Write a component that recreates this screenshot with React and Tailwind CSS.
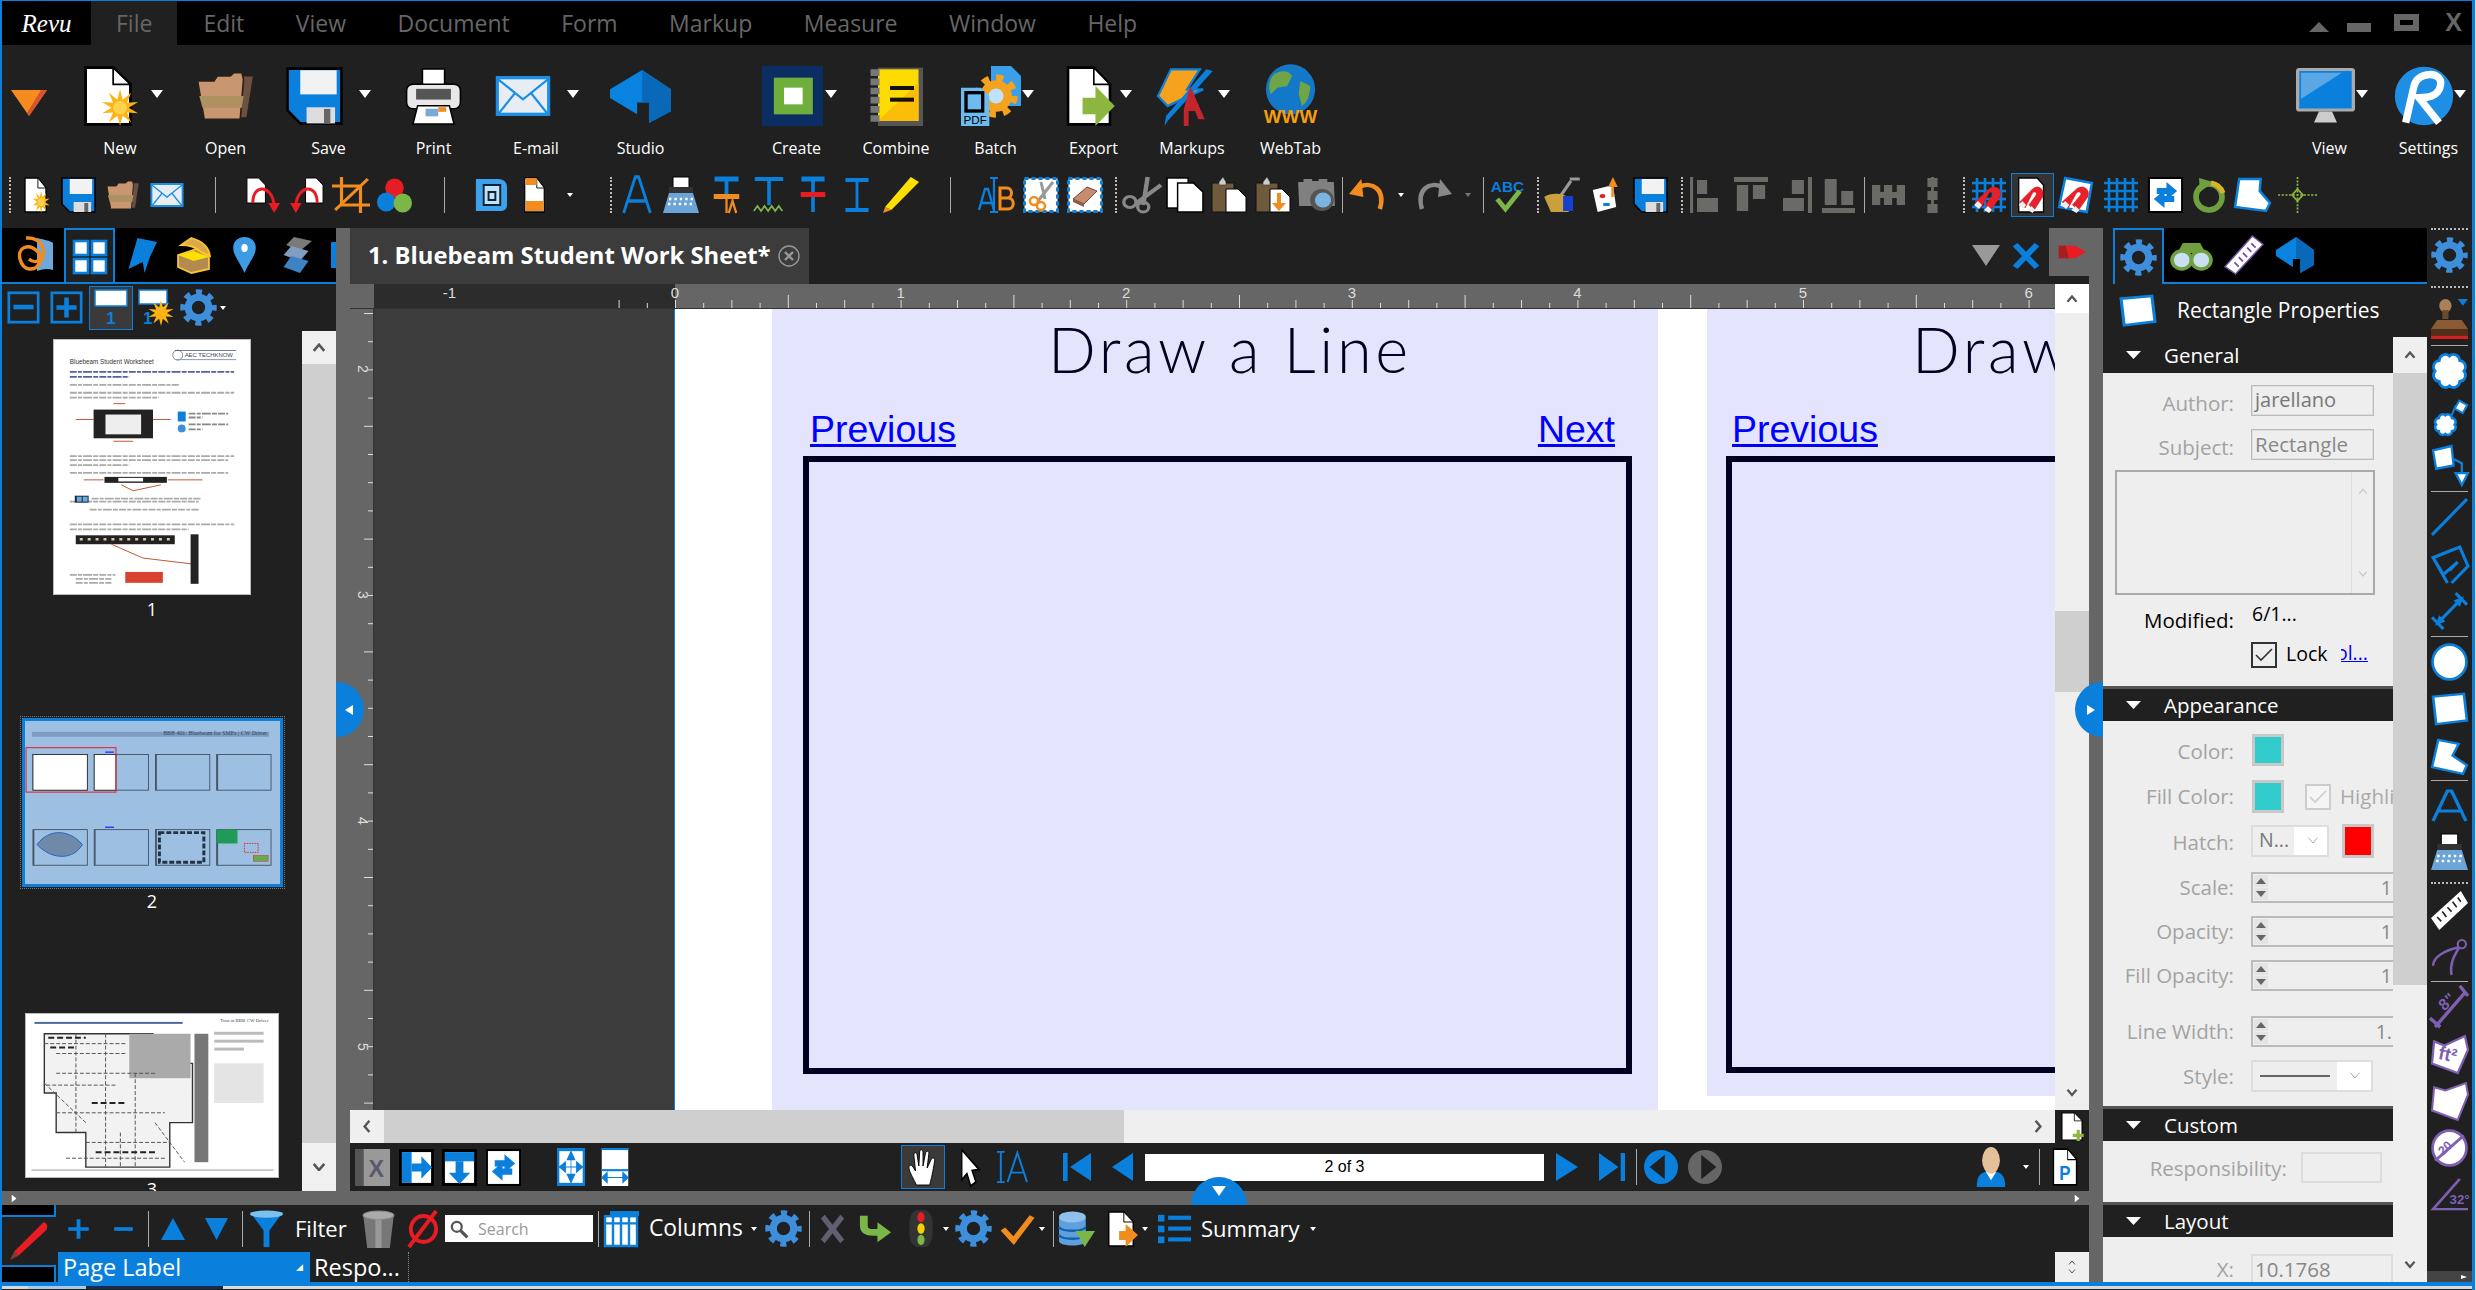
import React from 'react';

const star = (cx, cy, r1, r2, n) => {
  const pts = [];
  for (let i = 0; i < n * 2; i++) {
    const r = i % 2 ? r2 : r1;
    const a = (Math.PI * i) / n;
    pts.push(`${cx + r * Math.sin(a)},${cy - r * Math.cos(a)}`);
  }
  return pts.join(' ');
};

// bumpy outline for the cloud tools
const scallop = (cx, cy, r, n) => {
  const bump = r * Math.sin(Math.PI / n) * 1.1;
  let d = '';
  for (let i = 0; i <= n; i++) {
    const a = (2 * Math.PI * i) / n;
    const x = (cx + r * Math.sin(a)).toFixed(2);
    const y = (cy - r * Math.cos(a)).toFixed(2);
    d += i === 0 ? `M${x} ${y}` : `A${bump} ${bump} 0 0 1 ${x} ${y}`;
  }
  return d + 'Z';
};

const Page = ({ f = '#fff' }) => (
  <>
    <path d="M5 1H21L31 11V35H5Z" fill={f} stroke="#000" strokeWidth="1.6" />
    <path d="M21 1V11H31Z" fill="#fff" stroke="#000" strokeWidth="1" />
  </>
);

const Gear = ({ c = '#3d8fdc' }) => (
  <>
    <circle cx="18" cy="18" r="10" fill="none" stroke={c} strokeWidth="7" />
    <circle cx="18" cy="18" r="15" fill="none" stroke={c} strokeWidth="5.5" strokeDasharray="5.9 5.88" strokeDashoffset="2.95" />
  </>
);

const Magnet = () => (
  <>
    <path d="M10 31L4 25 18 12C24 7 32 12 29 20L20 33 14 28 22 18C23 15 20 14 18 16Z" fill="#e8202a" stroke="#c9141c" strokeWidth=".5" />
    <path d="M7 24L11 28 8 32 3 28ZM17 29L21 33 18 36 13 33Z" fill="#eee" />
  </>
);

const Grid = () => (
  <g stroke="#0a7fdc" strokeWidth="2.6">
    <path d="M1 6H35M1 14H35M1 22H35M1 30H35M6 1V35M14 1V35M22 1V35M30 1V35" />
  </g>
);

const Paste = ({ down }) => (
  <>
    <rect x="1" y="6" width="22" height="29" fill="#6f5a3c" stroke="#111" />
    <path d="M12 0l3 5v3H8V5z" fill="#ccc" stroke="#333" strokeWidth=".6" />
    <path d="M15 12H27L35 20V35H15Z" fill="#fff" stroke="#000" strokeWidth="1" />
    {down && <path d="M22 16h4v10h5l-7 8-7-8h5z" fill="#f28c1e" />}
  </>
);

const ICONS = {
  orange: (
    <>
      <path d="M0 0H36L18 36Z" fill="#f68b1f" />
      <path d="M36 0L18 36 16 32 30 0Z" fill="#d9532c" />
    </>
  ),
  new: (
    <>
      <Page />
      <polygon points={star(25, 25, 11, 5, 10)} fill="#fbb316" />
      <circle cx="25" cy="25" r="4" fill="#fcd34d" />
    </>
  ),
  page: <Page />,
  save: (
    <>
      <path d="M1 1H35V35H9L1 27Z" fill="#0a7fdc" stroke="#000" strokeWidth="1.6" />
      <rect x="9" y="2" width="23" height="15" fill="#f2f2f2" />
      <rect x="13" y="25" width="18" height="10" fill="#ddd" />
      <rect x="24" y="26" width="4" height="9" fill="#666" />
    </>
  ),
  open: (
    <>
      <path d="M26 6h9l-4 25H26Z" fill="#6b5142" stroke="#2a2018" strokeWidth=".6" />
      <path d="M1 9h10l2-3h8l2-2h5l1 4-2 24H5Z" fill="#c89670" stroke="#2a2018" strokeWidth="1" />
      <path d="M2 18H29L28 25H4Z" fill="#ae9160" />
    </>
  ),
  mail: (
    <>
      <rect x="1.5" y="7" width="33" height="22" fill="#e8edf3" stroke="#1b8fe6" strokeWidth="2" />
      <path d="M2 8L18 20 34 8M2 29L13 16M34 29L23 16" fill="none" stroke="#1b8fe6" strokeWidth="1.4" />
    </>
  ),
  studio: (
    <>
      <path d="M19 0L36 13V28L23 36V22H16V30L0 19V13Z" fill="#0a82e0" />
      <path d="M19 0L36 13V28L23 36V22H19Z" fill="#0a68b8" />
    </>
  ),
  print: (
    <>
      <rect x="11" y="0" width="14" height="11" fill="#fff" stroke="#000" />
      <rect x="1" y="10" width="34" height="16" rx="4" fill="#e8e8e8" stroke="#000" />
      <rect x="7" y="13" width="22" height="7" fill="#555" />
      <path d="M8 24H28L31 36H5Z" fill="#fff" stroke="#000" />
      <rect x="13" y="26" width="8" height="5" fill="#7aa9d8" />
      <rect x="21" y="25" width="5" height="3" fill="#f28c1e" />
    </>
  ),
  create: (
    <>
      <rect width="36" height="36" fill="#0b2e62" />
      <rect x="7" y="7" width="23" height="22" fill="#6fae3c" />
      <rect x="13" y="13" width="11" height="10" fill="#fff" />
    </>
  ),
  combine: (
    <>
      <rect x="6" y="1" width="30" height="35" fill="#555" />
      <rect x="6" y="2" width="27" height="31" fill="#fedb00" />
      <path d="M6 33L33 10V33Z" fill="#fbbd08" />
      <rect x="14" y="12" width="16" height="2.4" fill="#111" />
      <rect x="14" y="19" width="16" height="2.4" fill="#111" />
      <path d="M4 2V34" stroke="#777" strokeWidth="6" strokeDasharray="4 1.5" />
    </>
  ),
  batch: (
    <>
      <path d="M18 0H30L36 6V24H18Z" fill="#3aa0ea" />
      <circle cx="21" cy="18" r="7" fill="#bfe3fb" stroke="#f5a21f" strokeWidth="5" />
      <circle cx="21" cy="18" r="11" fill="none" stroke="#f5a21f" strokeWidth="4" strokeDasharray="4.3 4.3" />
      <path d="M0 13H12L17 18V36H0Z" fill="#6cbcf2" />
      <rect x="3" y="16" width="10" height="11" fill="none" stroke="#000" strokeWidth="2" />
      <text x="1.5" y="34.5" fontSize="7" fontFamily="Liberation Sans" fill="#000">PDF</text>
    </>
  ),
  export: (
    <>
      <Page />
      <path d="M14 19h8v-7l12 12-12 12v-7h-8z" fill="#8db63f" />
    </>
  ),
  markups: (
    <>
      <path d="M8 2H26L18 14H28L6 24 0 18Z" fill="#f7a21f" stroke="#0a7fdc" strokeWidth="1.4" />
      <path d="M34 3L6 33 4 36l1-6L30 2Z" fill="#0a7fdc" />
      <path d="M20 12L29 32H25L23 27H19V36H16V26Z" fill="#c4242c" />
    </>
  ),
  webtab: (
    <>
      <ellipse cx="18" cy="14" rx="15" ry="15" fill="#1478c8" />
      <path d="M8 5c5-3 9-2 11 1l-3 6-6 1-4 4c-2-4-1-9 2-12ZM24 9l6 3c0 6-2 10-5 12l-2-7Z" fill="#6fa544" />
      <text x="18" y="34.5" textAnchor="middle" fontSize="11.5" fontWeight="700" fontFamily="Liberation Sans" fill="#f59e0b">WWW</text>
    </>
  ),
  view: (
    <>
      <rect x="1" y="1" width="34" height="26" rx="1" fill="#0a7fdc" stroke="#aaa" strokeWidth="2" />
      <path d="M3 3H28L3 20Z" fill="#5ba7e3" />
      <path d="M14 28H22L25 35H11Z" fill="#ccc" />
    </>
  ),
  settings: (
    <>
      <ellipse cx="18" cy="18" rx="17.5" ry="17.5" fill="#1f8fe5" />
      <path d="M7 34L12 12C14 3 29 3 28 11 27 19 19 19 15 19L27 34" fill="none" stroke="#fff" strokeWidth="4.4" />
    </>
  ),
  crop: <path d="M9 0V28H36M0 9H27V36M3 33L34 2" fill="none" stroke="#f28c1e" strokeWidth="3" />,
  colors: (
    <>
      <circle cx="18" cy="11" r="9.5" fill="#e81c23" />
      <circle cx="9.5" cy="25" r="9.5" fill="#0a7fdc" />
      <circle cx="26.5" cy="26" r="9.5" fill="#7ab648" />
    </>
  ),
  rotL: (
    <>
      <path d="M2 1H14L21 8V26H2Z" fill="#fff" stroke="#000" />
      <path d="M8 26C8 6 28 8 30 28" fill="none" stroke="#e81c23" strokeWidth="3" />
      <path d="M24 26H36L30 36Z" fill="#e81c23" />
    </>
  ),
  rotR: (
    <>
      <path d="M16 1H27L34 8V26H16Z" fill="#fff" stroke="#000" />
      <path d="M28 26C28 6 8 8 6 28" fill="none" stroke="#e81c23" strokeWidth="3" />
      <path d="M0 26H12L6 36Z" fill="#e81c23" />
    </>
  ),
  chip: (
    <>
      <path d="M3 2H26C32 2 35 6 35 10V28C35 32 32 34 28 34H3Z" fill="#3da1ec" />
      <rect x="11" y="8" width="17" height="20" fill="#bfe3fb" stroke="#123" strokeWidth="2" />
      <rect x="16" y="15" width="7" height="8" fill="none" stroke="#123" strokeWidth="2" />
    </>
  ),
  pageO: (
    <>
      <Page />
      <rect x="6" y="1" width="15" height="7" fill="#f28c1e" />
      <rect x="6" y="24" width="24" height="10" fill="#f28c1e" />
    </>
  ),
  A: <path d="M2 36L16 0H20L34 36M8 24H28" fill="none" stroke="#0a7fdc" strokeWidth="3.4" />,
  typewriter: (
    <>
      <rect x="10" y="0" width="16" height="13" fill="#fff" stroke="#000" />
      <rect x="6" y="10" width="24" height="6" fill="#333" />
      <path d="M6 16H30L36 36H0Z" fill="#6ba4d6" />
      <path d="M6 22H30M5 27H31" stroke="#fff" strokeWidth="2.4" strokeDasharray="2.4 3" />
    </>
  ),
  textB: (
    <>
      <path d="M2 2H34M18 2V28" stroke="#0a7fdc" strokeWidth="4" fill="none" />
      <path d="M1 34l4-5 4 5 4-5 4 5 4-5 4 5 4-5 4 5" stroke="#7ab648" strokeWidth="2" fill="none" />
    </>
  ),
  textC: (
    <>
      <path d="M2 2H34M18 2V35" stroke="#0a7fdc" strokeWidth="5" fill="none" />
      <rect x="1" y="15" width="34" height="5" fill="#e81c23" />
    </>
  ),
  textD: <path d="M2 3H34M18 3V32M2 33H34" stroke="#0a7fdc" strokeWidth="4" fill="none" />,
  textE: (
    <>
      <path d="M2 2H34M18 2V18" stroke="#0a7fdc" strokeWidth="5" fill="none" />
      <rect x="1" y="17" width="34" height="5" fill="#f28c1e" />
      <path d="M18 22V36M21 36L26 24 31 36" stroke="#f28c1e" strokeWidth="3" fill="none" />
    </>
  ),
  highlight: (
    <>
      <path d="M28 0L36 5 9 33 3 30Z" fill="#fee000" />
      <path d="M3 30L9 33 1 36Z" fill="#f28c1e" />
    </>
  ),
  ab: (
    <>
      <path d="M0 33L6 12H9L15 33M3 26H12" fill="none" stroke="#0a7fdc" strokeWidth="2.4" />
      <path d="M15 1V35M11 1H19M11 35H19" stroke="#0a7fdc" strokeWidth="2.2" />
      <path d="M21 11H28C34 11 34 21 28 21H21ZM21 21H29C36 21 36 32 29 32H21Z" fill="none" stroke="#f28c1e" strokeWidth="3" />
    </>
  ),
  cutSel: (
    <>
      <rect x="1.5" y="1.5" width="33" height="33" fill="#fff" stroke="#0a7fdc" strokeWidth="3" strokeDasharray="4 3" />
      <path d="M30 5L15 24M18 5L22 22" stroke="#999" strokeWidth="3" />
      <circle cx="11" cy="24" r="4" fill="none" stroke="#f28c1e" strokeWidth="2.4" />
      <circle cx="18" cy="29" r="4" fill="none" stroke="#f28c1e" strokeWidth="2.4" />
    </>
  ),
  eraser: (
    <>
      <rect x="1.5" y="1.5" width="33" height="33" fill="#fff" stroke="#0a7fdc" strokeWidth="3" strokeDasharray="4 3" />
      <path d="M6 22L20 10 30 14 17 27Z" fill="#c98b6d" stroke="#6b4a3a" />
      <path d="M6 22L17 27V30L6 25Z" fill="#8a5e44" />
    </>
  ),
  scissors: (
    <>
      <path d="M36 8L14 26M24 0L20 28" stroke="#888" strokeWidth="4" fill="none" />
      <circle cx="8" cy="25" r="5.5" fill="none" stroke="#888" strokeWidth="3" />
      <circle cx="20" cy="30" r="5" fill="none" stroke="#888" strokeWidth="3" />
    </>
  ),
  copy: (
    <>
      <rect x="1" y="1" width="20" height="30" fill="#fff" stroke="#000" strokeWidth="1.4" />
      <path d="M11 6H26L35 15V35H11Z" fill="#fff" stroke="#000" strokeWidth="1.4" />
    </>
  ),
  paste: <Paste />,
  pasteD: <Paste down />,
  camera: (
    <>
      <path d="M1 5h5V2h8v2h6V2h8v3h6l1 24H2Z" fill="#808080" />
      <circle cx="23" cy="23" r="11" fill="#555" />
      <circle cx="24" cy="23" r="7.5" fill="#7db3e0" />
    </>
  ),
  undo: (
    <>
      <path d="M10 10C22 4 36 12 30 32" fill="none" stroke="#f28c1e" strokeWidth="4.4" />
      <path d="M0 17L12 2 14 20Z" fill="#f28c1e" />
    </>
  ),
  redo: (
    <>
      <path d="M26 10C14 4 0 12 6 32" fill="none" stroke="#888" strokeWidth="4.4" />
      <path d="M36 17L24 2 22 20Z" fill="#888" />
    </>
  ),
  abc: (
    <>
      <text x="18" y="15" textAnchor="middle" fontSize="15" fontWeight="700" fontFamily="Liberation Sans" fill="#0a7fdc">ABC</text>
      <path d="M8 22L16 32 30 14" fill="none" stroke="#7ab648" strokeWidth="4.6" />
    </>
  ),
  stamper: (
    <>
      <path d="M25 2H34M26 4L16 20" stroke="#999" strokeWidth="3" />
      <path d="M2 20C8 15 20 16 24 21V35H8Z" fill="#c9a03c" />
      <rect x="19" y="19" width="9" height="15" fill="#1540d0" />
    </>
  ),
  flatten: (
    <>
      <path d="M1 13L26 8 30 30 7 35Z" fill="#fff" />
      <ellipse cx="13" cy="19" rx="3.5" ry="2" fill="#e81c23" />
      <rect x="14" y="26" width="8" height="3" fill="#0a7fdc" />
      <path d="M20 10h4V20h3V10h5L26 0Z" fill="#f28c1e" />
    </>
  ),
  alignL: (
    <g fill="#6a6a66">
      <rect x="0" y="0" width="4" height="36" />
      <rect x="9" y="3" width="13" height="14" />
      <rect x="9" y="21" width="27" height="14" />
    </g>
  ),
  alignT: (
    <g fill="#6a6a66">
      <rect x="0" y="0" width="36" height="5" />
      <rect x="3" y="8" width="12" height="26" />
      <rect x="20" y="8" width="13" height="14" />
    </g>
  ),
  alignR: (
    <g fill="#6a6a66">
      <rect x="31" y="0" width="5" height="36" />
      <rect x="11" y="3" width="15" height="14" />
      <rect x="0" y="21" width="26" height="13" />
    </g>
  ),
  alignB: (
    <g fill="#6a6a66">
      <rect x="0" y="31" width="36" height="5" />
      <rect x="3" y="2" width="13" height="26" />
      <rect x="21" y="14" width="13" height="14" />
    </g>
  ),
  distH: (
    <g fill="#6a6a66">
      <rect x="0" y="8" width="9" height="20" />
      <rect x="13" y="8" width="9" height="20" />
      <rect x="27" y="8" width="9" height="20" />
      <rect x="0" y="15" width="36" height="6" />
    </g>
  ),
  distV: (
    <g fill="#6a6a66">
      <rect x="4" y="1" width="28" height="9" />
      <rect x="4" y="14" width="28" height="9" />
      <rect x="4" y="27" width="28" height="9" />
      <rect x="14" y="0" width="8" height="36" />
    </g>
  ),
  gridMag: (
    <>
      <Grid />
      <Magnet />
    </>
  ),
  pageMag: (
    <>
      <path d="M3 1H23L30 8V35H3Z" fill="#fff" stroke="#000" strokeWidth="1.4" />
      <Magnet />
    </>
  ),
  tiltMag: (
    <>
      <path d="M7 1L33 6 28 35 1 30Z" fill="#fff" stroke="#0a7fdc" strokeWidth="2.4" />
      <Magnet />
    </>
  ),
  grid: <Grid />,
  swap: (
    <>
      <rect x="1" y="1" width="34" height="34" fill="#fff" stroke="#000" strokeWidth="2" />
      <path d="M9 11h10V5l11 9-11 9v-6H9zM27 25H17v6L6 22l11-9v6h10z" fill="#0a7fdc" />
    </>
  ),
  refresh: (
    <>
      <circle cx="18" cy="20" r="13" fill="none" stroke="#6f9f3f" strokeWidth="5.6" />
      <path d="M8 1L22 5 9 15Z" fill="#6f9f3f" />
      <path d="M20 6C26 7 30 10 32 16" stroke="#d8b32c" strokeWidth="5" fill="none" />
    </>
  ),
  shape: <path d="M5 2H26L25 14 35 26 31 34 1 30Z" fill="#fff" stroke="#0a7fdc" strokeWidth="2.4" />,
  cross: (
    <g stroke="#8db63f" strokeWidth="1.6" fill="none">
      <path d="M18 0V36M0 18H36" strokeDasharray="2 1.4" />
      <path d="M18 12L23 18 18 24 13 18Z" />
    </g>
  ),
  swirl: (
    <>
      <path d="M20 1C28 3 34 4 36 6V33C30 31 26 32 20 34Z" fill="#6fa9dc" />
      <path d="M9 1C24 0 30 12 24 24S6 34 3 22 12 6 20 14 19 28 12 22" fill="none" stroke="#f28c1e" strokeWidth="3.4" />
    </>
  ),
  thumbs: (
    <g fill="#fff" stroke="#0a7fdc" strokeWidth="2.6">
      <rect x="2" y="2" width="14" height="14" />
      <rect x="20" y="2" width="14" height="14" />
      <rect x="2" y="20" width="14" height="14" />
      <rect x="20" y="20" width="14" height="14" />
    </g>
  ),
  bookmark: <path d="M14 1L36 5 28 20 22 36 20 25 4 32Z" fill="#0a7fdc" />,
  box: (
    <>
      <path d="M3 18L21 12 33 20V32L16 36 3 30Z" fill="#b38a50" stroke="#fbc531" strokeWidth="1.8" />
      <path d="M3 18L18 24 33 20 18 14Z" fill="#fee000" />
      <path d="M6 8L16 1C26 4 33 10 34 19L24 14C20 10 14 8 6 8Z" fill="#d8a94a" stroke="#fbc531" strokeWidth="1.8" />
    </>
  ),
  pin: (
    <>
      <path d="M18 36C10 22 4 18 4 11 4 4 10 0 18 0S32 4 32 11C32 18 26 22 18 36Z" fill="#3d9be6" />
      <circle cx="18" cy="11" r="4" fill="#fff" />
    </>
  ),
  layers: (
    <g>
      <path d="M15 0L36 4 22 14 6 8Z" fill="#7a7a7a" />
      <path d="M12 9L32 14 22 24 3 18Z" fill="#7f9ec0" />
      <path d="M12 19L32 24 22 36 3 30Z" fill="#3d83c4" />
    </g>
  ),
  minusBox: (
    <>
      <rect x="2" y="2" width="32" height="32" fill="none" stroke="#0a7fdc" strokeWidth="3" />
      <rect x="7" y="15" width="22" height="5" fill="#0a7fdc" />
    </>
  ),
  plusBox: (
    <>
      <rect x="2" y="2" width="32" height="32" fill="none" stroke="#0a7fdc" strokeWidth="3" />
      <path d="M7 18H29M18 7V29" stroke="#0a7fdc" strokeWidth="5" />
    </>
  ),
  thumbOne: (
    <>
      <rect x="2" y="0" width="32" height="16" fill="#fff" stroke="#0a7fdc" strokeWidth="1.5" />
      <text x="18" y="34" textAnchor="middle" fontSize="17" fontWeight="700" fontFamily="Liberation Sans" fill="#0a7fdc">1</text>
    </>
  ),
  thumbNew: (
    <>
      <rect x="2" y="0" width="28" height="14" fill="#fff" stroke="#0a7fdc" strokeWidth="1.5" />
      <text x="6" y="34" fontSize="17" fontWeight="700" fontFamily="Liberation Sans" fill="#0a7fdc">1</text>
      <polygon points={star(24, 23, 13, 6, 10)} fill="#fbb316" />
    </>
  ),
  gear: <Gear />,
  binoc: (
    <>
      <path d="M10 6H26L31 16H5Z" fill="#6f9f3f" />
      <circle cx="9" cy="23" r="9" fill="#c9dff2" stroke="#6f9f3f" strokeWidth="3.4" />
      <circle cx="27" cy="23" r="9" fill="#c9dff2" stroke="#6f9f3f" strokeWidth="3.4" />
    </>
  ),
  ruler: (
    <>
      <path d="M26 0L36 8 10 36 0 29Z" fill="#fff" stroke="#6e4f9e" strokeWidth="1.4" />
      <path d="M25 7L29 11M21 11L25 15M17 16L21 20M13 20L17 24M9 25L13 29" stroke="#6e4f9e" strokeWidth="1.6" />
    </>
  ),
  rulerW: (
    <>
      <path d="M29 0L36 11 8 36 0 25Z" fill="#fff" />
      <path d="M26 6L29 10M21 10L25 15M16 15L20 19M11 19L15 24M6 24L10 28" stroke="#202020" strokeWidth="1.6" />
    </>
  ),
  rect: <path d="M2 4L32 1 35 30 5 34Z" fill="#fff" stroke="#0a7fdc" strokeWidth="2.6" />,
  stamp: (
    <>
      <circle cx="14" cy="6" r="6" fill="#a9805a" />
      <rect x="11" y="10" width="6" height="8" fill="#6b4a30" />
      <path d="M0 27L6 19H30L36 27Z" fill="#8c5a35" />
      <rect x="0" y="27" width="36" height="6" fill="#4e3118" />
      <rect x="0" y="33" width="36" height="3" fill="#d5201f" />
      <path d="M26 0H36L31 6Z" fill="#0a7fdc" />
    </>
  ),
  cloud: <path d={scallop(18, 18, 14, 8)} fill="#fff" stroke="#0a7fdc" strokeWidth="2.6" />,
  cloudPlus: (
    <>
      <path d={scallop(14, 24, 9, 8)} fill="#fff" stroke="#0a7fdc" strokeWidth="2.4" />
      <path d="M20 15L24 6 30 7" fill="none" stroke="#0a7fdc" strokeWidth="2" />
      <rect x="25" y="2" width="9" height="9" fill="#fff" stroke="#0a7fdc" strokeWidth="2" transform="rotate(30 29 6)" />
    </>
  ),
  callout: (
    <>
      <path d="M2 4L20 0 22 18 5 21Z" fill="#fff" stroke="#0a7fdc" strokeWidth="2.2" />
      <path d="M22 12L30 16V25" fill="none" stroke="#0a7fdc" strokeWidth="2.2" />
      <path d="M24 25H36L30 36Z" fill="#fff" stroke="#0a7fdc" strokeWidth="2.2" />
    </>
  ),
  line: <path d="M1 35L35 1" stroke="#0a7fdc" strokeWidth="3" />,
  poly: <path d="M16 36L2 12 28 2 36 20 20 36M18 24L26 16 12 28 2 12" fill="none" stroke="#0a7fdc" strokeWidth="3" />,
  measureArrow: (
    <>
      <path d="M6 30L30 6" stroke="#0a7fdc" strokeWidth="3" />
      <path d="M1 24L12 35M24 1L35 12" stroke="#0a7fdc" strokeWidth="3" />
      <path d="M4 32L14 28 8 22ZM32 4L22 8 28 14Z" fill="#0a7fdc" />
    </>
  ),
  circle: <circle cx="18" cy="18" r="16.5" fill="#fff" stroke="#0a7fdc" strokeWidth="2.6" />,
  polyW: <path d="M7 1L27 5 21 17 35 27 31 36 1 29Z" fill="#fff" stroke="#0a7fdc" strokeWidth="2.4" />,
  caliper: (
    <>
      <circle cx="30" cy="6" r="4" fill="none" stroke="#7f5fb3" strokeWidth="2" />
      <path d="M27 9C14 12 2 18 2 27M27 10C22 18 18 26 20 36" fill="none" stroke="#7f5fb3" strokeWidth="2.4" />
    </>
  ),
  eight: (
    <>
      <path d="M4 36L34 4M-1 28L9 36M28 -1L36 8" stroke="#7f5fb3" strokeWidth="3.2" />
      <text x="9" y="20" fontSize="15" fontWeight="700" fontFamily="Liberation Sans" fill="#7f5fb3" transform="rotate(-42 14 16)">8"</text>
    </>
  ),
  ft: (
    <>
      <path d="M3 6L13 10 33 1 36 14 26 36 1 27Z" fill="#fff" stroke="#7f5fb3" strokeWidth="2.2" />
      <text x="7" y="24" fontSize="18" fontWeight="700" fontFamily="Liberation Sans" fill="#7f5fb3" transform="rotate(12 14 20)">ft²</text>
    </>
  ),
  area: <path d="M3 5L14 8 34 1 36 12 26 36 1 27Z" fill="#fff" stroke="#7f5fb3" strokeWidth="2" />,
  dia: (
    <>
      <circle cx="18" cy="18" r="16.5" fill="#fff" stroke="#7f5fb3" strokeWidth="2.6" />
      <path d="M4 30L32 6" stroke="#7f5fb3" strokeWidth="2.6" />
      <text x="7" y="22" fontSize="12" fontWeight="700" fontFamily="Liberation Sans" fill="#7f5fb3" transform="rotate(-42 14 18)">20</text>
    </>
  ),
  angle: (
    <>
      <path d="M28 1L2 34H36" fill="none" stroke="#7f5fb3" strokeWidth="2.6" />
      <text x="18" y="28" fontSize="13" fontWeight="700" fontFamily="Liberation Sans" fill="#7f5fb3">32°</text>
    </>
  ),
  xBox: (
    <>
      <rect width="36" height="36" fill="#555" />
      <rect x="9" width="27" height="36" fill="#999" />
      <text x="22" y="27" textAnchor="middle" fontSize="24" fontWeight="700" fontFamily="Liberation Sans" fill="#5a5a6e">X</text>
    </>
  ),
  pageR: (
    <>
      <rect width="36" height="36" fill="#000" />
      <rect x="3" y="3" width="30" height="30" fill="#fff" />
      <rect x="3" y="3" width="10" height="30" fill="#0a7fdc" />
      <path d="M13 14h10V7l11 11-11 11v-7H13z" fill="#0a7fdc" />
    </>
  ),
  pageD: (
    <>
      <rect width="36" height="36" fill="#000" />
      <rect x="3" y="3" width="30" height="30" fill="#fff" />
      <rect x="3" y="3" width="30" height="9" fill="#0a7fdc" />
      <path d="M14 12h8v11h7L18 34 7 23h7z" fill="#0a7fdc" />
    </>
  ),
  fitAll: (
    <>
      <rect x="1.5" y="1.5" width="33" height="33" fill="#fff" stroke="#0a7fdc" strokeWidth="3" />
      <path d="M18 3V33M3 18H33M18 3l-5 8h10zM18 33l-5-8h10zM3 18l8-5v10zM33 18l-8-5v10z" stroke="#0a7fdc" fill="#0a7fdc" strokeWidth="1" />
    </>
  ),
  fitWidth: (
    <>
      <rect x="1" y="0" width="34" height="36" fill="#fff" />
      <rect x="1" y="20" width="34" height="2" fill="#0a7fdc" />
      <path d="M1 28H35M1 28l7-5v10zM35 28l-7-5v10z" stroke="#0a7fdc" fill="#0a7fdc" strokeWidth="1" />
      <rect x="1" y="0" width="34" height="2" fill="#0a7fdc" />
    </>
  ),
  hand: (
    <path d="M10 36C7 30 2 24 1 19 1 16 4 15 6 18L9 22 7 6C7 3 11 3 11 6L13 17 14 3C14 0 18 0 18 3V17L21 4C22 1 26 2 25 5L23 19 28 10C29 8 33 9 32 12 30 22 28 30 26 36Z" fill="#fff" stroke="#000" strokeWidth="1" />
  ),
  cursor: <path d="M6 1L6 30 14 24 20 36 28 32 22 21 33 20Z" fill="#fff" stroke="#000" strokeWidth="2" />,
  textSel: (
    <>
      <path d="M7 2V34M3 2H11M3 34H11" stroke="#0a7fdc" strokeWidth="2" fill="none" />
      <path d="M14 34L24 3 34 34M18 24H30" fill="none" stroke="#0a7fdc" strokeWidth="2" />
    </>
  ),
  first: (
    <>
      <rect x="0" y="0" width="6" height="36" fill="#0a7fdc" />
      <path d="M36 0V36L9 18Z" fill="#0a7fdc" />
    </>
  ),
  prev: <path d="M36 0V36L0 18Z" fill="#0a7fdc" />,
  next: <path d="M0 0V36L36 18Z" fill="#0a7fdc" />,
  last: (
    <>
      <rect x="30" y="0" width="6" height="36" fill="#0a7fdc" />
      <path d="M0 0V36L27 18Z" fill="#0a7fdc" />
    </>
  ),
  back: (
    <>
      <circle cx="18" cy="18" r="18" fill="#0a7fdc" />
      <path d="M22 5V31L6 18Z" fill="#202020" />
    </>
  ),
  fwd: (
    <>
      <circle cx="18" cy="18" r="18" fill="#666" />
      <path d="M14 5V31L30 18Z" fill="#202020" />
    </>
  ),
  person: (
    <>
      <path d="M2 36C2 24 8 22 18 22S34 24 34 36Z" fill="#0a7fdc" />
      <path d="M12 22L18 30 24 22Z" fill="#fff" />
      <ellipse cx="18" cy="12" rx="10" ry="12" fill="#e5c19b" />
    </>
  ),
  pageP: (
    <>
      <Page />
      <text x="18" y="30" textAnchor="middle" fontSize="19" fontWeight="700" fontFamily="Liberation Sans" fill="#0a7fdc">P</text>
    </>
  ),
  pagePlus: (
    <>
      <Page />
      <path d="M26 22V36M19 29H33" stroke="#8db63f" strokeWidth="4" />
    </>
  ),
  pen: (
    <>
      <path d="M32 0C36 2 36 5 34 8L8 32 4 28Z" fill="#e81c23" />
      <path d="M4 28L8 32 0 36Z" fill="#8a3a2a" />
    </>
  ),
  plus: <path d="M18 2V34M2 18H34" stroke="#0a7fdc" strokeWidth="6" />,
  minus: <path d="M2 18H34" stroke="#0a7fdc" strokeWidth="6" />,
  up: <path d="M18 0L36 36H0Z" fill="#0a7fdc" />,
  down: <path d="M0 0H36L18 36Z" fill="#0a7fdc" />,
  funnel: (
    <>
      <path d="M1 2H35L21 20V36H15V20Z" fill="#0a7fdc" />
      <ellipse cx="18" cy="4" rx="17" ry="3.6" fill="#7cc0f0" />
    </>
  ),
  trash: (
    <>
      <path d="M3 4H33L29 36H7Z" fill="#777" />
      <ellipse cx="18" cy="5" rx="15" ry="4" fill="#aaa" stroke="#888" />
      <path d="M18 9V36" stroke="#999" strokeWidth="6" />
    </>
  ),
  no: (
    <>
      <circle cx="19" cy="18" r="13" fill="none" stroke="#e81c23" strokeWidth="4" />
      <path d="M4 36L32 0" stroke="#e81c23" strokeWidth="4" />
    </>
  ),
  columns: (
    <>
      <path d="M6 1H35V6H6Z" fill="#0a7fdc" />
      <rect x="1" y="6" width="32" height="29" fill="#fff" stroke="#0a7fdc" strokeWidth="2.4" />
      <path d="M1 13H33M9 6V35M17 6V35M25 6V35" stroke="#0a7fdc" strokeWidth="2.4" />
    </>
  ),
  xGray: <path d="M4 2L32 34M32 2L4 34" stroke="#5f5f70" strokeWidth="7.5" />,
  green: (
    <>
      <path d="M6 2V14C6 20 10 22 16 22H22" fill="none" stroke="#7ab648" strokeWidth="8" />
      <path d="M20 10L34 22 20 34Z" fill="#7ab648" />
    </>
  ),
  traffic: (
    <>
      <rect x="2" y="0" width="32" height="36" rx="12" fill="#333" />
      <circle cx="18" cy="7" r="5" fill="#e81c23" />
      <circle cx="18" cy="18" r="5" fill="#f5d200" />
      <circle cx="18" cy="29" r="5" fill="#7ab648" />
    </>
  ),
  check: <path d="M3 18L14 32 33 3" fill="none" stroke="#f28c1e" strokeWidth="6" />,
  db: (
    <>
      <path d="M1 6V30C1 36 27 36 27 30V6Z" fill="#5f9fdc" />
      <ellipse cx="14" cy="6" rx="13" ry="5.6" fill="#8fc1ec" />
      <path d="M1 16C4 21 24 21 27 16M1 24C4 29 24 29 27 24" fill="none" stroke="#0a63ae" strokeWidth="2.4" />
      <path d="M17 20H36L26 36Z" fill="#7ab648" />
    </>
  ),
  pageOut: (
    <>
      <Page />
      <path d="M16 20h7v-7l13 11-13 12v-7h-7z" fill="#f28c1e" />
    </>
  ),
  list: (
    <g fill="#0a7fdc">
      <rect x="0" y="1" width="7" height="8" />
      <rect x="11" y="2" width="25" height="5" />
      <rect x="0" y="14" width="7" height="8" />
      <rect x="11" y="15" width="25" height="5" />
      <rect x="0" y="27" width="7" height="8" />
      <rect x="11" y="28" width="25" height="5" />
    </g>
  ),
  magnify: (
    <>
      <circle cx="14" cy="14" r="9" fill="none" stroke="#555" strokeWidth="4" />
      <path d="M21 21L33 33" stroke="#555" strokeWidth="6" />
    </>
  ),
  tagRed: (
    <>
      <path d="M1 4H22L36 18 22 32H1Z" fill="#e81c23" />
      <path d="M1 4H10L14 32H1Z" fill="#a61e22" />
    </>
  ),
  triGray: <path d="M0 0H36L18 36Z" fill="#999" />,
  xBlue: <path d="M4 1L32 35M32 1L4 35" stroke="#0a7fdc" strokeWidth="8" />,
  rectHead: <path d="M2 4L32 1 35 30 5 34Z" fill="#fff" stroke="#0a7fdc" strokeWidth="3" />,
};

const Ic = ({ n, c = '' }) => (
  <svg viewBox="0 0 36 36" preserveAspectRatio="none" className={`shrink-0 block overflow-visible ${c}`}>
    {ICONS[n]}
  </svg>
);

const Tri = ({ c = '', fill = '#fff' }) => (
  <svg viewBox="0 0 12 8" preserveAspectRatio="none" className={`shrink-0 block ${c}`}>
    <path d="M0 0H12L6 8Z" fill={fill} />
  </svg>
);

const Sep = ({ c = '' }) => <div className={`w-px h-[36px] bg-[#aaa] shrink-0 ${c}`} />;
const Dots = ({ c = '' }) => <div className={`w-[2px] h-[36px] shrink-0 border-l-2 border-dotted border-[#bbb] ${c}`} />;

const Big = ({ n, label, c, icon, arrow, lab = '' }) => (
  <div className={`shrink-0 flex flex-col ${c}`}>
    <div className="h-[60px] flex items-center">
      <Ic n={n} c={icon} />
      {arrow && <Tri c={`w-[12px] h-[8px] mb-[4px] ${arrow}`} />}
    </div>
    <div className={`mt-[13px] h-[18px] flex justify-center ${lab}`}>
      <span className="text-[16px] leading-[18px] text-white whitespace-nowrap">{label}</span>
    </div>
  </div>
);

const Ribbon = () => (
  <div className="h-[120px] shrink-0 flex items-start pt-[21px] pr-[6px]">
    <Ic n="orange" c="ml-[9px] mt-[24px] w-[36px] h-[26px]" />
    <Big n="new" label="New" c="ml-[30px] w-[86px]" icon="w-[62px] h-[60px]" arrow="ml-[12px]" />
    <Big n="open" label="Open" c="ml-[33px] w-[59px]" icon="w-[59px] h-[60px]" />
    <Big n="save" label="Save" c="ml-[31px] w-[85px]" icon="w-[57px] h-[58px]" arrow="ml-[16px]" />
    <Big n="print" label="Print" c="ml-[34px] w-[57px]" icon="w-[57px] h-[55px]" />
    <Big n="mail" label="E-mail" c="ml-[33px] w-[84px]" icon="w-[56px] h-[60px]" arrow="ml-[16px]" lab="pr-[2px]" />
    <Big n="studio" label="Studio" c="ml-[31px] w-[61px]" icon="w-[61px] h-[53px]" />
    <Big n="create" label="Create" c="ml-[91px] w-[75px]" icon="w-[61px] h-[60px]" arrow="ml-[2px]" lab="pr-[6px]" />
    <Big n="combine" label="Combine" c="ml-[32px] w-[54px]" icon="w-[54px] h-[60px]" />
    <Big n="batch" label="Batch" c="ml-[38px] w-[73px]" icon="w-[60px] h-[60px]" arrow="ml-[1px]" lab="pr-[4px]" />
    <Big n="export" label="Export" c="ml-[26px] w-[72px]" icon="w-[58px] h-[60px]" arrow="ml-[2px]" lab="pr-[5px]" />
    <Big n="markups" label="Markups" c="ml-[26px] w-[72px]" icon="w-[58px] h-[60px]" arrow="ml-[2px]" lab="pr-[4px]" />
    <Big n="webtab" label="WebTab" c="ml-[31px] w-[59px]" icon="w-[59px] h-[60px]" />
    <Big n="view" label="View" c="ml-auto w-[72px]" icon="w-[59px] h-[56px]" arrow="ml-[1px]" lab="pr-[5px]" />
    <Big n="settings" label="Settings" c="ml-[26px] w-[72px]" icon="w-[60px] h-[60px]" arrow="ml-0" lab="pr-[3px]" />
  </div>
);

const TOOLS = [
  ['dots', 'ml-[7px]'],
  ['new', 'ml-[10px] w-[29px]'],
  ['save', 'ml-[11px] w-[35px]'],
  ['open', 'ml-[10px] w-[34px]'],
  ['mail', 'ml-[10px] w-[34px]'],
  ['sep', 'ml-[31px]'],
  ['rotL', 'ml-[29px] w-[35px]'],
  ['rotR', 'ml-[10px] w-[35px]'],
  ['crop', 'ml-[7px] w-[38px]'],
  ['colors', 'ml-[7px] w-[35px]'],
  ['sep', 'ml-[32px]'],
  ['chip', 'ml-[28px] w-[35px]'],
  ['pageO', 'ml-[13px] w-[27px]'],
  ['tri', 'ml-[19px]'],
  ['dots', 'ml-[37px]'],
  ['A', 'ml-[10px] w-[30px]'],
  ['typewriter', 'ml-[11px] w-[36px]'],
  ['textE', 'ml-[14px] w-[27px]'],
  ['textB', 'ml-[13px] w-[32px]'],
  ['textC', 'ml-[15px] w-[26px]'],
  ['textD', 'ml-[18px] w-[26px]'],
  ['highlight', 'ml-[12px] w-[37px]'],
  ['sep', 'ml-[31px]'],
  ['ab', 'ml-[28px] w-[36px]'],
  ['cutSel', 'ml-[8px] w-[36px]'],
  ['eraser', 'ml-[8px] w-[36px]'],
  ['dots', 'ml-[12px]'],
  ['scissors', 'ml-[4px] w-[40px]'],
  ['copy', 'ml-[5px] w-[38px]'],
  ['paste', 'ml-[7px] w-[36px]'],
  ['pasteD', 'ml-[8px] w-[36px]'],
  ['camera', 'ml-[6px] w-[39px]'],
  ['sep', 'ml-[6px]'],
  ['undo', 'ml-[6px] w-[37px]'],
  ['tri', 'ml-[12px]'],
  ['redo', 'ml-[12px] w-[36px]'],
  ['triGray', 'ml-[13px]'],
  ['sep', 'ml-[12px]'],
  ['abc', 'ml-[5px] w-[37px]'],
  ['dots', 'ml-[11px]'],
  ['stamper', 'ml-[3px] w-[40px]'],
  ['flatten', 'ml-[10px] w-[29px]'],
  ['save', 'ml-[12px] w-[35px]'],
  ['dots', 'ml-[13px]'],
  ['alignL', 'ml-[7px] w-[28px]'],
  ['alignT', 'ml-[16px] w-[34px]'],
  ['alignR', 'ml-[15px] w-[29px]'],
  ['alignB', 'ml-[10px] w-[33px]'],
  ['sep', 'ml-[9px]'],
  ['distH', 'ml-[7px] w-[33px]'],
  ['distV', 'ml-[21px] w-[13px]'],
  ['dots', 'ml-[24px]'],
  ['gridMag', 'ml-[6px] w-[36px]'],
  ['selMag', 'ml-[4px]'],
  ['tiltMag', 'ml-[4px] w-[37px]'],
  ['grid', 'ml-[8px] w-[36px]'],
  ['swap', 'ml-[9px] w-[35px]'],
  ['refresh', 'ml-[8px] w-[36px]'],
  ['shape', 'ml-[7px] w-[37px]'],
  ['cross', 'ml-[7px] w-[39px]'],
];

const Toolbar = () => (
  <div className="h-[63px] shrink-0 flex items-center pb-[3px]">
    {TOOLS.map(([n, c], i) => {
      if (n === 'sep') return <Sep key={i} c={c} />;
      if (n === 'dots') return <Dots key={i} c={c} />;
      if (n === 'tri') return <Tri key={i} c={`w-[6px] h-[4px] ${c}`} />;
      if (n === 'triGray') return <Tri key={i} fill="#777" c={`w-[6px] h-[4px] ${c}`} />;
      if (n === 'selMag')
        return (
          <div key={i} className={`w-[43px] h-[44px] shrink-0 flex items-center justify-center border border-[#0a7fdc] bg-[#333] ${c}`}>
            <Ic n="pageMag" c="w-[33px] h-[36px]" />
          </div>
        );
      return <Ic key={i} n={n} c={`h-[36px] ${c}`} />;
    })}
  </div>
);

const TitleBar = () => (
  <div className="h-[44px] shrink-0 bg-black flex items-stretch text-[#666] text-[23px]">
    <div className="w-[89px] flex items-center justify-center">
      <span className="text-white text-[25px] italic leading-none font-['Liberation_Serif',serif]">Revu</span>
    </div>
    <div className="bg-[#202020] px-[25px] flex items-center">File</div>
    <div className="flex items-center gap-[51.5px] ml-[26px]">
      <span>Edit</span>
      <span>View</span>
      <span>Document</span>
      <span>Form</span>
      <span>Markup</span>
      <span>Measure</span>
      <span>Window</span>
      <span>Help</span>
    </div>
    <div className="ml-auto flex items-center pr-[10px]">
      <svg viewBox="0 0 20 10" className="w-[20px] h-[10px] mt-[8px]"><path d="M10 0L20 10H0Z" fill="#666" /></svg>
      <div className="ml-[18px] mt-[8px] w-[24px] h-[9px] bg-[#666]" />
      <div className="ml-[23px] mb-[2px] w-[25px] h-[17px] bg-[#666] flex items-center justify-center">
        <div className="w-[13px] h-[5px] bg-black" />
      </div>
      <span className="ml-[26px] mb-[2px] text-[25px] leading-none font-bold font-['Liberation_Sans',sans-serif]">X</span>
    </div>
  </div>
);

// word-like dashes, reads as blurred body text at this scale
const TextLine = ({ x = 16, y, w = 166, c = '#aaa' }) => (
  <path d={`M${x} ${y}H${x + w}`} stroke={c} strokeWidth="1.8" strokeDasharray="7 1.2 4 1.2 9 1.2 5 1.2" />
);

const Thumb1 = () => (
  <svg viewBox="0 0 198 256" className="w-[198px] h-[256px] shrink-0 bg-white border border-[#bbb]">
    <text x="16" y="24" fontSize="6.4" fill="#333" fontFamily="Liberation Sans">Bluebeam Student Worksheet</text>
    <circle cx="125" cy="15" r="5" fill="none" stroke="#888" />
    <text x="132" y="17" fontSize="6" fill="#445" fontFamily="Liberation Sans">AEC TECHKNOW</text>
    <rect x="122" y="10" width="62" height=".8" fill="#4a5a7a" />
    <rect x="122" y="19" width="62" height="1" fill="#8a9aba" />
    <TextLine y={32} c="#55609a" />
    <TextLine y={37} w={60} c="#55609a" />
    <TextLine y={45} w={110} />
    <TextLine y={53} />
    <TextLine y={58} w={90} />
    <TextLine y={117} />
    <TextLine y={121} w={160} />
    <TextLine y={126} w={60} />
    <TextLine y={134} w={160} />
    <TextLine y={163} w={130} />
    <TextLine x={36} y={171} w={110} />
    <TextLine y={186} />
    <TextLine y={191} w={120} />
    <rect x="40" y="70" width="60" height="29" fill="#222" />
    <rect x="52" y="75" width="36" height="20" fill="#eee" />
    <path d="M22 80H40M100 80H118M60 64H72M60 102H80" stroke="#c0563a" />
    <rect x="125" y="72" width="8" height="10" fill="#0a7fdc" />
    <circle cx="129" cy="89" r="4" fill="#3d8fdc" />
    <TextLine x={136} y={74} w={40} c="#888" />
    <TextLine x={136} y={78} w={14} c="#888" />
    <TextLine x={136} y={85} w={40} c="#888" />
    <TextLine x={136} y={90} w={14} c="#888" />
    <rect x="51" y="138" width="63" height="6" fill="#222" />
    <rect x="65" y="139" width="25" height="3.6" fill="#fff" />
    <path d="M30 141H50M115 141H150M68 146L80 152 108 146" stroke="#c0563a" fill="none" />
    <rect x="21" y="157" width="14" height="7" fill="#1a2a3a" />
    <rect x="23" y="158" width="5" height="5" fill="#6aa9e0" />
    <rect x="29" y="158" width="5" height="5" fill="#6aa9e0" />
    <TextLine x={38} y={160} w={110} />
    <rect x="22" y="197" width="100" height="9" fill="#222" />
    <path d="M26 201H118" stroke="#d8c8a0" strokeWidth="2.4" strokeDasharray="3 5" />
    <path d="M58 206L90 220 140 226" stroke="#c0563a" fill="none" />
    <rect x="72" y="234" width="38" height="11" fill="#d9422f" />
    <rect x="138" y="196" width="8" height="50" fill="#222" />
    <TextLine y={237} w={46} />
    <TextLine x={22} y={241} w={36} />
    <TextLine x={22} y={245} w={36} />
  </svg>
);

const MiniCell = ({ x, y, w = 55, h = 36, title }) => (
  <g>
    <rect x={x} y={y} width={w} height={h} fill="none" stroke="#345" strokeWidth=".8" />
    <rect x={x} y={y} width="1.4" height={h} fill="#456" />
    <text x={x + w / 2} y={y - 6} textAnchor="middle" fontSize="4" fill="#456" fontFamily="Liberation Sans">{title}</text>
    <rect x={x + 1} y={y - 3} width="9" height="1" fill="#00f" />
    <rect x={x + w - 6} y={y - 3} width="5" height="1" fill="#00f" />
  </g>
);

const Thumb2 = () => (
  <div className="w-[265px] h-[173px] shrink-0 border border-dotted border-[#777] p-px">
    <svg viewBox="0 0 258 165" className="block w-full h-full bg-[#9cbfe2] border-[3px] border-[#0a7fdc]">
      <rect x="7" y="11" width="240" height="5" fill="#7d9cc0" />
      <text x="245" y="14" textAnchor="end" fontSize="6" fill="#345" fontFamily="Liberation Serif">BBB 401: Bluebeam for SMEs | CW Driver</text>
      <MiniCell x="8" y="34" title="Draw a Line" />
      <MiniCell x="70" y="34" title="Draw Polyline" />
      <MiniCell x="132" y="34" title="Draw Rectangle" />
      <MiniCell x="194" y="34" title="Draw Polygon" />
      <rect x="8" y="34" width="55" height="36" fill="#fff" stroke="#222" strokeWidth=".8" />
      <rect x="70" y="34" width="22" height="36" fill="#fff" stroke="#222" strokeWidth=".8" />
      <rect x="1" y="27" width="91" height="45" fill="none" stroke="#e81c23" strokeWidth="1" />
      <MiniCell x="8" y="110" title="Trace the Blue" />
      <MiniCell x="70" y="110" title="Write Some Text" />
      <MiniCell x="132" y="110" title="Highlight a Toilet" />
      <MiniCell x="194" y="110" title="Format Painter" />
      <path d="M12 125C25 108 45 110 58 125 50 140 28 142 12 125Z" fill="#6f8aa8" stroke="#2e63c4" />
      <rect x="136" y="113" width="45" height="30" fill="none" stroke="#234" strokeWidth="3" strokeDasharray="5 2" />
      <rect x="194" y="110" width="21" height="14" fill="#1f9b57" />
      <rect x="222" y="124" width="14" height="9" fill="none" stroke="#d33" strokeDasharray="1.5 1" />
      <rect x="231" y="136" width="15" height="6" fill="#6aa84f" stroke="#d33" strokeWidth=".5" />
    </svg>
  </div>
);

const Thumb3 = () => (
  <svg viewBox="0 0 254 165" className="w-[254px] h-[165px] shrink-0 bg-white border border-[#bbb]">
    <rect x="8" y="8" width="150" height="2" fill="#4a6a9a" />
    <text x="245" y="8" textAnchor="end" fontSize="5" fill="#345" fontFamily="Liberation Serif">Tour at BBB CW Driver</text>
    <path d="M18 20H128V50H168V110H145V155H60V120H30V80H18Z" fill="#f2f2f2" stroke="#333" strokeWidth="1.4" />
    <rect x="104" y="20" width="62" height="45" fill="#aaa" />
    <path d="M18 30H100M30 40H100M30 60H130M20 72H90M30 100H140M50 20V120M80 20V155M110 60V155M60 130H145M18 70L60 110M130 110L160 150M40 146H140M95 120V155" stroke="#555" strokeWidth="1" strokeDasharray="4 2" />
    <path d="M22 24H60M24 34H48M66 90H100M70 140H130" stroke="#222" strokeWidth="2" strokeDasharray="6 3" />
    <rect x="170" y="20" width="14" height="130" fill="#777" />
    <rect x="190" y="18" width="50" height="3" fill="#bbb" />
    <rect x="190" y="26" width="50" height="3" fill="#bbb" />
    <rect x="190" y="34" width="30" height="3" fill="#bbb" />
    <rect x="190" y="50" width="50" height="40" fill="#e4e4e4" />
    <path d="M5 158H250" stroke="#999" />
  </svg>
);

const Chevron = ({ up, c = '', stroke = '#555', sw = 3 }) => (
  <svg viewBox="0 0 16 10" className={`block ${c}`}>
    <path d={up ? 'M2 9L8 2 14 9' : 'M2 1L8 8 14 1'} fill="none" stroke={stroke} strokeWidth={sw} />
  </svg>
);

const LeftPanel = () => (
  <div className="w-[334px] shrink-0 flex flex-col h-[963px]">
    <div className="h-[56px] shrink-0 bg-black border-b-2 border-[#0a7fdc] flex items-center overflow-hidden">
      <Ic n="swirl" c="ml-[15px] w-[36px] h-[36px]" />
      <div className="ml-[11px] -mb-[2px] w-[51px] h-[56px] shrink-0 bg-[#202020] border-2 border-b-0 border-[#0a7fdc] flex items-center justify-center">
        <Ic n="thumbs" c="w-[36px] h-[36px]" />
      </div>
      <Ic n="bookmark" c="ml-[10px] w-[32px] h-[36px]" />
      <Ic n="box" c="ml-[18px] w-[37px] h-[36px]" />
      <Ic n="pin" c="ml-[18px] w-[29px] h-[36px]" />
      <Ic n="layers" c="ml-[22px] w-[31px] h-[36px]" />
      <div className="ml-[19px] w-[5px] h-[26px] bg-[#0a7fdc] shrink-0" />
    </div>
    <div className="h-[47px] shrink-0 flex items-center">
      <Ic n="minusBox" c="ml-[5px] w-[33px] h-[33px]" />
      <Ic n="plusBox" c="ml-[10px] w-[33px] h-[33px]" />
      <div className="ml-[6px] w-[44px] h-[44px] shrink-0 bg-[#3a3a3a] border border-[#0a7fdc] flex items-center justify-center">
        <Ic n="thumbOne" c="w-[36px] h-[36px]" />
      </div>
      <Ic n="thumbNew" c="ml-[4px] w-[36px] h-[36px]" />
      <Ic n="gear" c="ml-[7px] w-[37px] h-[37px]" />
      <Tri c="ml-[3px] w-[6px] h-[4px]" />
    </div>
    <div className="flex flex-1 min-h-0">
      <div className="w-[300px] shrink-0 flex flex-col items-center pt-[8px] overflow-hidden text-white text-[18px]">
        <Thumb1 />
        <div className="h-[28px] leading-[28px] shrink-0">1</div>
        <div className="mt-[93px] shrink-0"><Thumb2 /></div>
        <div className="h-[24px] leading-[24px] shrink-0">2</div>
        <div className="mt-[100px] shrink-0"><Thumb3 /></div>
        <div className="h-[22px] leading-[22px] shrink-0">3</div>
      </div>
      <div className="w-[34px] shrink-0 flex flex-col bg-[#cfcfcf]">
        <div className="h-[33px] bg-[#f0f0f0] flex items-center justify-center"><Chevron up c="w-[14px]" /></div>
        <div className="flex-1" />
        <div className="h-[48px] bg-[#f0f0f0] flex items-center justify-center"><Chevron c="w-[14px]" /></div>
      </div>
    </div>
  </div>
);

const HRuler = () => {
  const ticks = [];
  for (let i = -2; i < 53; i++) {
    const x = 325 + i * 28.2;
    if (x < 28 || x > 1700) continue;
    const m = ((i % 8) + 8) % 8;
    const h = m === 4 ? 13 : m % 2 === 0 ? 8 : 5;
    ticks.push(<rect key={i} x={x} y={24 - h} width="1" height={h} fill="#ddd" />);
  }
  return (
    <svg viewBox="0 0 1705 25" className="block w-[1705px] h-[25px] shrink-0">
      <rect width="24" height="25" fill="#666" />
      <rect x="24" width="301" height="25" fill="#2c2c2c" />
      <rect x="325" width="1380" height="25" fill="#666" />
      <rect y="24" width="1705" height="1" fill="#333" />
      {ticks}
      {[-1, 0, 1, 2, 3, 4, 5, 6].map((n) => (
        <text key={n} x={325 + n * 225.6} y="14" textAnchor="middle" fontSize="15" fill="#ddd" fontFamily="Liberation Sans">{n}</text>
      ))}
    </svg>
  );
};

const VRuler = () => {
  const ticks = [];
  for (let i = 0; i < 29; i++) {
    const y = 4 + i * 28.2;
    const long = i % 4 === 0;
    ticks.push(<rect key={i} x={long ? 14 : 18} y={y} width={long ? 9 : 5} height="1" fill="#ddd" />);
  }
  return (
    <svg viewBox="0 0 24 801" className="block w-[24px] h-[801px] shrink-0 bg-[#666]">
      {ticks}
      <rect x="23" width="1" height="801" fill="#333" />
      {[2, 3, 4, 5].map((n, i) => (
        <text key={n} x="8" y={60 + i * 226} textAnchor="middle" fontSize="14" fill="#ddd" fontFamily="Liberation Sans" transform={`rotate(90 8 ${60 + i * 226})`}>{n}</text>
      ))}
    </svg>
  );
};

const Canvas = () => (
  <div className="flex flex-1 h-[801px] overflow-hidden">
    <div className="w-[301px] shrink-0 bg-[#3c3c3c] border-r border-[#0a7fdc]" />
    <div className="w-[97px] shrink-0 bg-white" />
    <div className="w-[886px] shrink-0 bg-[#e4e4fc]">
      <div className="h-[82px] flex items-center pl-[276px] pb-[4px] text-[63px] font-light tracking-[3.6px] leading-none text-[#000020] font-['Lato',sans-serif] whitespace-nowrap">Draw a Line</div>
      <div className="h-[65px] flex items-end justify-between pl-[38px] pr-[43px] pb-[4px] font-['Liberation_Sans',sans-serif] text-[37.5px] leading-[45px] text-[#00f] underline">
        <span>Previous</span>
        <span>Next</span>
      </div>
      <div className="ml-[31px] w-[829px] h-[618px] border-[6px] border-[#000020]" />
    </div>
    <div className="w-[49px] shrink-0 bg-white" />
    <div className="flex-1 min-w-0 bg-white overflow-hidden">
      <div className="h-[787px] bg-[#e4e4fc] overflow-hidden">
        <div className="h-[82px] flex items-center pl-[205px] pb-[4px] text-[63px] font-light tracking-[3.6px] leading-none text-[#000020] font-['Lato',sans-serif] whitespace-nowrap">Draw</div>
        <div className="h-[65px] flex items-end pl-[25px] pb-[4px] font-['Liberation_Sans',sans-serif] text-[37.5px] leading-[45px] text-[#00f] underline">Previous</div>
        <div className="ml-[19px] w-[829px] h-[617px] border-[6px] border-[#000020]" />
      </div>
    </div>
  </div>
);

const Center = () => (
  <div className="flex-1 min-w-0 flex flex-col h-[963px]">
    <div className="h-[56px] shrink-0 flex items-start">
      <div className="w-[459px] h-[56px] bg-[#3c3c3c] flex items-center pl-[18px] font-bold text-white text-[23.8px]">
        <span className="whitespace-nowrap">1. Bluebeam Student Work Sheet*</span>
        <svg viewBox="0 0 22 22" className="ml-[7px] w-[22px] h-[22px] shrink-0">
          <circle cx="11" cy="11" r="10" fill="none" stroke="#999" strokeWidth="1.4" />
          <path d="M7 7L15 15M15 7L7 15" stroke="#999" strokeWidth="2.4" />
        </svg>
      </div>
      <Ic n="triGray" c="ml-[1163px] mt-[17px] w-[28px] h-[21px]" />
      <Ic n="xBlue" c="ml-[12px] mt-[16px] w-[28px] h-[24px]" />
      <div className="ml-[9px] w-[40px] h-[48px] bg-[#666] pt-[16px] pl-[9px]">
        <Ic n="tagRed" c="w-[28px] h-[16px]" />
      </div>
    </div>
    <div className="flex h-[826px] shrink-0">
      <div className="w-[1705px] shrink-0 flex flex-col">
        <HRuler />
        <div className="flex">
          <VRuler />
          <Canvas />
        </div>
      </div>
      <div className="flex-1 flex flex-col bg-[#efefef]">
        <div className="h-[29px] bg-white flex items-center justify-center"><Chevron up c="w-[12px]" /></div>
        <div className="mt-[298px] h-[81px] bg-[#cfcfcf]" />
        <div className="mt-auto h-[34px] flex items-center justify-center"><Chevron c="w-[12px]" /></div>
      </div>
    </div>
    <div className="h-[33px] shrink-0 flex">
      <div className="w-[1705px] shrink-0 flex bg-[#efefef]">
        <div className="w-[34px] flex items-center justify-center">
          <svg viewBox="0 0 10 16" className="w-[8px]"><path d="M8 1L2 8 8 15" fill="none" stroke="#555" strokeWidth="3" /></svg>
        </div>
        <div className="w-[740px] bg-[#cfcfcf]" />
        <div className="ml-auto w-[34px] flex items-center justify-center">
          <svg viewBox="0 0 10 16" className="w-[8px]"><path d="M2 1L8 8 2 15" fill="none" stroke="#555" strokeWidth="3" /></svg>
        </div>
      </div>
      <div className="flex-1 bg-[#202020] flex items-center justify-center">
        <Ic n="pagePlus" c="w-[28px] h-[29px]" />
      </div>
    </div>
    <div className="h-[48px] shrink-0 flex items-center">
      <Ic n="xBox" c="ml-[5px] w-[35px] h-[37px]" />
      <Ic n="pageR" c="ml-[9px] w-[35px] h-[37px]" />
      <Ic n="pageD" c="ml-[8px] w-[35px] h-[37px]" />
      <Ic n="swap" c="ml-[9px] w-[35px] h-[37px]" />
      <Ic n="fitAll" c="ml-[36px] w-[28px] h-[38px]" />
      <Ic n="fitWidth" c="ml-[16px] w-[28px] h-[38px]" />
      <div className="ml-[272px] w-[44px] h-[44px] shrink-0 bg-[#3a3a3a] border border-[#0a7fdc] flex items-center justify-center">
        <Ic n="hand" c="w-[30px] h-[36px]" />
      </div>
      <Ic n="cursor" c="ml-[13px] w-[23px] h-[37px]" />
      <Ic n="textSel" c="ml-[13px] w-[35px] h-[34px]" />
      <Ic n="first" c="ml-[34px] w-[28px] h-[28px]" />
      <Ic n="prev" c="ml-[21px] w-[21px] h-[28px]" />
      <div className="ml-[12px] w-[399px] h-[27px] shrink-0 bg-white flex items-center justify-center text-[16px] text-black font-['Liberation_Sans',sans-serif]">2 of 3</div>
      <Ic n="next" c="ml-[12px] w-[22px] h-[28px]" />
      <Ic n="last" c="ml-[21px] w-[26px] h-[28px]" />
      <Sep c="ml-[11px]" />
      <Ic n="back" c="ml-[7px] w-[34px] h-[34px]" />
      <Ic n="fwd" c="ml-[10px] w-[34px] h-[34px]" />
      <Ic n="person" c="ml-[253px] w-[32px] h-[40px]" />
      <Tri c="ml-[16px] w-[6px] h-[4px]" />
      <Sep c="ml-[10px]" />
      <Ic n="pageP" c="ml-[9px] w-[32px] h-[38px]" />
    </div>
  </div>
);

const MarkupBar = () => (
  <div className="flex h-[77px] shrink-0">
    <div className="w-[54px] shrink-0 flex flex-col">
      <div className="h-[12px] bg-black border-b-2 border-r-2 border-[#0a7fdc]" />
      <div className="flex-1 flex items-center pl-[8px]"><Ic n="pen" c="w-[38px] h-[38px]" /></div>
      <div className="h-[17px] bg-black border-t-2 border-r-2 border-[#0a7fdc]" />
    </div>
    <div className="flex-1 min-w-0 flex flex-col">
      <div className="h-[47px] flex items-center text-white text-[22px]">
        <Ic n="plus" c="ml-[11px] w-[23px] h-[22px]" />
        <Ic n="minus" c="ml-[23px] w-[21px] h-[22px]" />
        <Sep c="ml-[14px]" />
        <Ic n="up" c="ml-[12px] w-[24px] h-[22px]" />
        <Ic n="down" c="ml-[20px] w-[23px] h-[22px]" />
        <Sep c="ml-[14px]" />
        <Ic n="funnel" c="ml-[6px] w-[35px] h-[37px]" />
        <span className="ml-[11px] w-[51px] shrink-0">Filter</span>
        <Ic n="trash" c="ml-[14px] w-[37px] h-[38px]" />
        <Ic n="no" c="ml-[8px] w-[35px] h-[36px]" />
        <div className="ml-[5px] w-[148px] h-[27px] shrink-0 bg-white flex items-center pl-[4px] text-[16px] text-[#999]">
          <Ic n="magnify" c="w-[20px] h-[20px]" />
          <span className="ml-[9px]">Search</span>
        </div>
        <Sep c="ml-[5px]" />
        <Ic n="columns" c="ml-[5px] w-[36px] h-[37px]" />
        <span className="ml-[9px] w-[93px] shrink-0 text-[22.8px]">Columns</span>
        <Tri c="ml-[9px] w-[6px] h-[4px]" />
        <Ic n="gear" c="ml-[8px] w-[37px] h-[37px]" />
        <Sep c="ml-[7px]" />
        <Ic n="xGray" c="ml-[10px] w-[25px] h-[28px]" />
        <Ic n="green" c="ml-[13px] w-[35px] h-[30px]" />
        <Ic n="traffic" c="ml-[15px] w-[26px] h-[37px]" />
        <Tri c="ml-[9px] w-[6px] h-[4px]" />
        <Ic n="gear" c="ml-[6px] w-[37px] h-[37px]" />
        <Ic n="check" c="ml-[8px] w-[35px] h-[30px]" />
        <Tri c="ml-[4px] w-[6px] h-[4px]" />
        <Sep c="ml-[8px]" />
        <Ic n="db" c="ml-[4px] w-[37px] h-[36px]" />
        <Ic n="pageOut" c="ml-[9px] w-[34px] h-[36px]" />
        <Tri c="ml-[4px] w-[6px] h-[4px]" />
        <Ic n="list" c="ml-[10px] w-[33px] h-[30px]" />
        <span className="ml-[10px] w-[101px] shrink-0">Summary</span>
        <Tri c="ml-[8px] w-[6px] h-[4px]" />
      </div>
      <div className="h-[30px] flex items-stretch text-white text-[23.5px] leading-[30px]">
        <div className="ml-[2px] w-[252px] shrink-0 bg-[#0a7fdc] pl-[5px] flex items-center justify-between pr-[7px]">
          <span>Page Label</span>
          <span className="text-[9px]">◢</span>
        </div>
        <div className="ml-[4px] w-[95px] shrink-0 border-r border-dotted border-[#888]">Respo...</div>
        <div className="ml-auto w-[34px] bg-[#efefef] flex flex-col items-center justify-center gap-[4px]">
          <Chevron up c="w-[8px]" sw={2} />
          <Chevron c="w-[8px]" sw={2} />
        </div>
      </div>
    </div>
  </div>
);

const Head = ({ label, top }) => (
  <div className={`shrink-0 bg-[#202020] flex items-center pl-[23px] text-white text-[20.5px] ${top ? 'h-[35px] border-t-[3px] border-[#555]' : 'h-[36px]'}`}>
    <Tri c="w-[15px] h-[8px]" />
    <span className="ml-[23px]">{label}</span>
  </div>
);

const Label = ({ children, c = 'text-[#a3a3a3]' }) => (
  <div className={`w-[131px] shrink-0 text-right text-[20.5px] leading-none whitespace-nowrap ${c}`}>{children}</div>
);

const Spin = ({ v, c }) => (
  <div className={`flex items-center ${c}`}>
    <Label>{v[0]}</Label>
    <div className="ml-[17px] flex-1 h-[31px] border-2 border-[#bbb] border-r-0 flex items-center pl-[1px] text-[#888] text-[19.5px]">
      <div className="w-[14px] flex flex-col gap-[1px]">
        <div className="h-[12px] bg-[#e4e4e4] flex items-center justify-center"><Tri c="w-[10px] h-[6px] rotate-180" fill="#666" /></div>
        <div className="h-[12px] bg-[#e4e4e4] flex items-center justify-center"><Tri c="w-[10px] h-[6px]" fill="#666" /></div>
      </div>
      <span className="ml-auto pr-[1px]">{v[1]}</span>
    </div>
  </div>
);

const PropPanel = () => (
  <div className="w-[324px] shrink-0 flex flex-col">
    <div className="h-[56px] shrink-0 pl-[10px]">
      <div className="h-full bg-black border-b-2 border-[#0a7fdc] flex items-center">
        <div className="-mb-[2px] w-[51px] h-[56px] shrink-0 bg-[#202020] border-2 border-b-0 border-[#0a7fdc] flex items-center justify-center">
          <Ic n="gear" c="w-[37px] h-[37px]" />
        </div>
        <Ic n="binoc" c="ml-[8px] w-[39px] h-[36px]" />
        <Ic n="ruler" c="ml-[14px] w-[38px] h-[38px]" />
        <Ic n="studio" c="ml-[13px] w-[38px] h-[36px]" />
      </div>
    </div>
    <div className="h-[53px] shrink-0 flex items-center pl-[16px] text-white text-[21px]">
      <Ic n="rectHead" c="w-[37px] h-[32px]" />
      <span className="ml-[21px] whitespace-nowrap">Rectangle Properties</span>
    </div>
    <div className="flex-1 min-h-0 flex">
      <div className="w-[290px] shrink-0 flex flex-col bg-[#eee] overflow-hidden">
        <Head label="General" />
        <div className="h-[313px] shrink-0">
          <div className="mt-[12px] flex items-center">
            <Label c="text-[#a3a3a3] mt-[5px]">Author:</Label>
            <div className="ml-[17px] w-[123px] h-[31px] border-2 border-[#ddd] outline outline-[#bbb] -outline-offset-1 pl-[2px] leading-[26px] text-[#777] text-[20px]">jarellano</div>
          </div>
          <div className="mt-[13px] flex items-center">
            <Label c="text-[#a3a3a3] mt-[5px]">Subject:</Label>
            <div className="ml-[17px] w-[123px] h-[31px] border-2 border-[#ddd] outline outline-[#bbb] -outline-offset-1 pl-[2px] leading-[26px] text-[#888] text-[20.5px]">Rectangle</div>
          </div>
          <div className="mt-[10px] ml-[12px] w-[260px] h-[125px] border-2 border-[#aaa] flex justify-end">
            <div className="w-[22px] h-full border-l border-[#ddd] flex flex-col items-center justify-between py-[16px]">
              <Chevron up c="w-[10px]" stroke="#c8c8c8" sw={2} />
              <Chevron c="w-[10px]" stroke="#c8c8c8" sw={2} />
            </div>
          </div>
          <div className="mt-[12px] flex items-start h-[26px]">
            <Label c="text-black mt-[3px]">Modified:</Label>
            <span className="ml-[18px] -mt-[8px] text-[19.5px] text-black">6/1...</span>
          </div>
          <div className="mt-[8px] ml-[148px] flex items-center text-[19.5px] text-black">
            <div className="w-[26px] h-[26px] shrink-0 border-2 border-[#333] flex items-center justify-center">
              <svg viewBox="0 0 18 14" className="w-[18px]"><path d="M1 7L6 12 17 1" fill="none" stroke="#333" strokeWidth="1.6" /></svg>
            </div>
            <span className="ml-[9px] w-[45px] -mt-[2px]">Lock</span>
            <span className="ml-[10px] w-[27px] h-[26px] overflow-hidden text-[#00f] underline leading-[22px] flex justify-end">ol...</span>
          </div>
        </div>
        <Head label="Appearance" top />
        <div className="h-[385px] shrink-0">
          <div className="mt-[13px] flex items-center">
            <Label c="text-[#a3a3a3] mt-[2px]">Color:</Label>
            <div className="ml-[18px] w-[32px] h-[32px] border-[3px] border-[#c8c8c8] bg-[#33cccc]" />
          </div>
          <div className="mt-[14px] flex items-center">
            <Label>Fill Color:</Label>
            <div className="ml-[18px] w-[32px] h-[33px] border-[3px] border-[#c8c8c8] bg-[#33cccc] shrink-0" />
            <div className="ml-[21px] w-[26px] h-[26px] shrink-0 border-2 border-[#ccc] bg-[#f5f5f5] flex items-center justify-center">
              <svg viewBox="0 0 18 14" className="w-[18px]"><path d="M1 7L6 12 17 1" fill="none" stroke="#ccc" strokeWidth="1.6" /></svg>
            </div>
            <span className="ml-[9px] text-[#aaa] text-[20.5px] whitespace-nowrap">Highlight</span>
          </div>
          <div className="mt-[11px] flex items-center">
            <Label c="text-[#a3a3a3] mt-[2px]">Hatch:</Label>
            <div className="ml-[17px] w-[78px] h-[32px] shrink-0 border-2 border-[#ddd] bg-white flex items-center">
              <span className="w-[41px] h-full bg-[#eee] pl-[6px] text-[#777] text-[19.5px] leading-[26px]">N...</span>
              <Chevron c="ml-[13px] w-[12px]" stroke="#999" sw={1.2} />
            </div>
            <div className="ml-[13px] w-[32px] h-[34px] border-[3px] border-[#c8c8c8] bg-[#f00] shrink-0" />
          </div>
          <Spin v={['Scale:', '1']} c="mt-[14px]" />
          <Spin v={['Opacity:', '1']} c="mt-[13px]" />
          <Spin v={['Fill Opacity:', '1']} c="mt-[13px]" />
          <Spin v={['Line Width:', '1.']} c="mt-[25px]" />
          <div className="mt-[13px] flex items-center">
            <Label>Style:</Label>
            <div className="ml-[17px] w-[122px] h-[32px] shrink-0 border-2 border-[#ddd] bg-white flex items-center">
              <div className="w-[84px] h-full bg-[#eee] flex items-center pl-[7px]">
                <div className="w-[70px] h-[2px] bg-[#666]" />
              </div>
              <Chevron c="ml-[12px] w-[12px]" stroke="#999" sw={1.2} />
            </div>
          </div>
        </div>
        <Head label="Custom" top />
        <div className="h-[61px] shrink-0 pt-[11px] flex items-start">
          <div className="w-[184px] shrink-0 mt-[6px] text-right text-[#a3a3a3] text-[20.5px] leading-none">Responsibility:</div>
          <div className="ml-[14px] w-[81px] h-[31px] border-2 border-[#ddd]" />
        </div>
        <Head label="Layout" top />
        <div className="mt-[17px] flex items-center">
          <Label>X:</Label>
          <div className="ml-[17px] flex-1 h-[31px] border-2 border-[#ddd] pl-[2px] leading-[26px] text-[#888] text-[20.5px]">10.1768</div>
        </div>
      </div>
      <div className="flex-1 flex flex-col bg-[#efefef]">
        <div className="h-[36px] flex items-center justify-center"><Chevron up c="w-[12px]" /></div>
        <div className="h-[612px] bg-[#cfcfcf]" />
        <div className="mt-auto h-[34px] flex items-center justify-center"><Chevron c="w-[12px]" /></div>
      </div>
    </div>
  </div>
);

const STRIP = [
  ['stamp', 'mt-[11px] h-[40px]'],
  ['rule', ''],
  ['cloud', 'mt-[6px] h-[38px]'],
  ['cloudPlus', 'mt-[10px] h-[37px]'],
  ['callout', 'mt-[9px] h-[39px]'],
  ['rule', ''],
  ['line', 'mt-[6px] h-[38px]'],
  ['poly', 'mt-[9px] h-[38px]'],
  ['measureArrow', 'mt-[9px] h-[38px]'],
  ['rule', ''],
  ['circle', 'mt-[6px] h-[38px]'],
  ['rect', 'mt-[12px] h-[33px]'],
  ['polyW', 'mt-[13px] h-[35px]'],
  ['rule', ''],
  ['A', 'mt-[10px] h-[30px]'],
  ['typewriter', 'mt-[13px] h-[36px]'],
  ['dotted', ''],
  ['rulerW', 'mt-[7px] h-[39px]'],
  ['caliper', 'mt-[8px] h-[37px]'],
  ['rule', ''],
  ['eight', 'mt-[5px] h-[40px]'],
  ['ft', 'mt-[8px] h-[38px]'],
  ['area', 'mt-[9px] h-[38px]'],
  ['dia', 'mt-[9px] h-[38px]'],
  ['angle', 'mt-[11px] h-[33px]'],
];

const ToolStrip = () => (
  <div className="w-[45px] shrink-0 flex flex-col items-center relative">
    <div className="mt-0 w-[37px] border-t-2 border-dotted border-[#bbb]" />
    <Ic n="gear" c="mt-[7px] w-[37px] h-[36px]" />
    <div className="mt-[13px] w-[37px] border-t-2 border-dotted border-[#bbb]" />
    {STRIP.map(([n, c], i) => {
      if (n === 'rule') return <div key={i} className="mt-[6px] w-[37px] h-px bg-[#aaa] shrink-0" />;
      if (n === 'dotted') return <div key={i} className="mt-[12px] w-[37px] border-t-2 border-dotted border-[#bbb] shrink-0" />;
      return <Ic key={i} n={n} c={`w-[37px] ${c}`} />;
    })}
    <div className="mt-auto w-full h-[11px] bg-[#444] flex justify-end items-center pr-[6px]">
      <Tri c="w-[4px] h-[6px] -rotate-90" />
    </div>
  </div>
);

export default function App() {
  return (
    <div className="w-[2476px] h-[1290px] bg-[#d9d9d9] overflow-hidden font-['Open_Sans',sans-serif]">
      <div className="w-[2475px] h-[1290px] bg-[#202020] border-t border-l-2 border-r-[3px] border-[#0a7fdc] flex flex-col">
        <TitleBar />
        <Ribbon />
        <Toolbar />
        <div className="h-[1054px] shrink-0 flex relative">
          <div className="w-[2087px] shrink-0 flex flex-col">
            <div className="flex">
              <LeftPanel />
              <div className="w-[14px] shrink-0 bg-[#666]" />
              <Center />
            </div>
            <div className="h-[14px] shrink-0 bg-[#666] flex items-center justify-between px-[8px]">
              <Tri c="w-[8px] h-[5px] -rotate-90" />
              <Tri c="w-[8px] h-[5px] -rotate-90" />
            </div>
            <MarkupBar />
          </div>
          <div className="w-[14px] shrink-0 bg-[#666]" />
          <PropPanel />
          <ToolStrip />
          <div className="absolute left-[334px] top-[454px] w-[28px] h-[55px] rounded-r-full bg-[#0a7fdc] flex items-center pl-[8px]">
            <Tri c="w-[10px] h-[8px] rotate-90" />
          </div>
          <div className="absolute left-[2073px] top-[454px] w-[28px] h-[55px] rounded-l-full bg-[#0a7fdc] flex items-center justify-end pr-[7px]">
            <Tri c="w-[10px] h-[8px] -rotate-90" />
          </div>
          <div className="absolute left-[1189px] top-[949px] w-[56px] h-[28px] rounded-t-full bg-[#0a7fdc] flex items-center justify-center">
            <Tri c="w-[14px] h-[10px]" />
          </div>
        </div>
        <div className="h-[4px] shrink-0 bg-[#0a7fdc]" />
        <div className="h-[3px] shrink-0 flex bg-[#d9d9d9]">
          <div className="ml-[26px] w-[58px] bg-[#a8c8e8]" />
          <div className="w-[137px] bg-[#1a2a4a]" />
        </div>
      </div>
    </div>
  );
}
